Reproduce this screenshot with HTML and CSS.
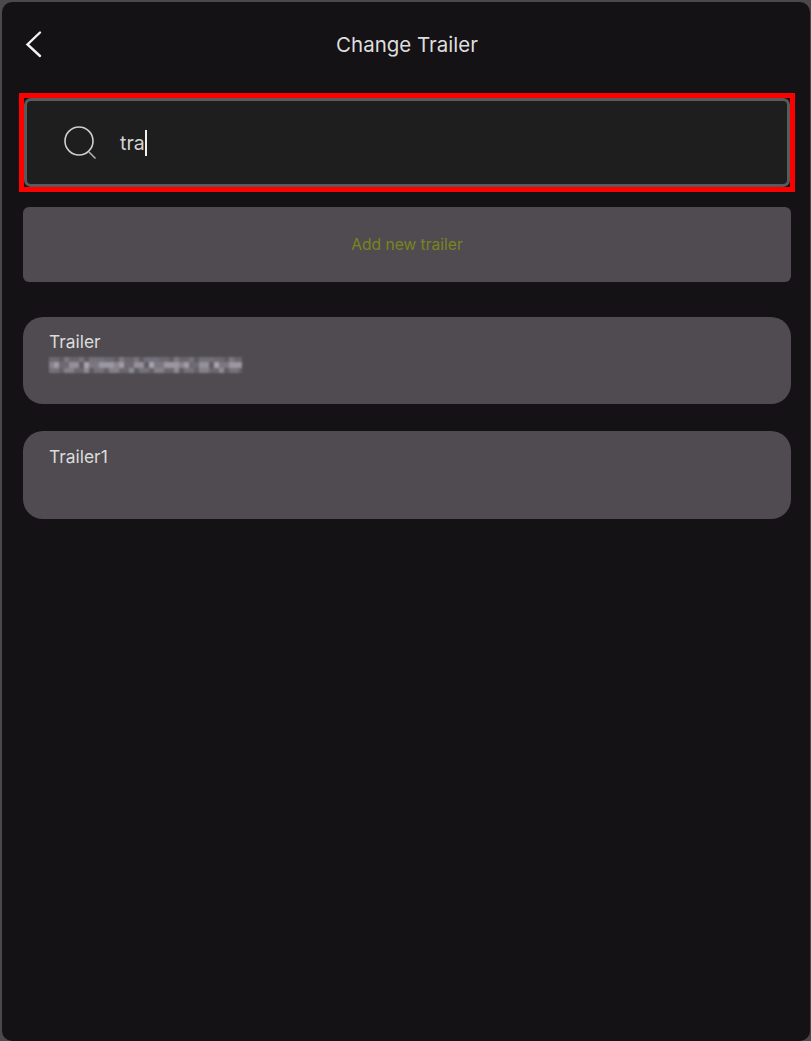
FILE: index.html
```html
<!DOCTYPE html>
<html lang="en">
<head>
<meta charset="utf-8">
<title>Change Trailer</title>
<link rel="stylesheet" href="styles.css">
</head>
<body>
<main class="panel">
  <header class="header">
    <button class="back" aria-label="Back">
      <svg width="20" height="28" viewBox="0 0 20 28" fill="none"><path d="M17 2.5 L4.5 14.5 L17 26" stroke="#f2f2f2" stroke-width="2.4" stroke-linecap="round" stroke-linejoin="miter"/></svg>
    </button>
    <h1 class="title">Change Trailer</h1>
  </header>
  <div class="highlight">
    <div class="search">
      <svg class="search-icon" width="36" height="36" viewBox="0 0 36 36" fill="none"><circle cx="16" cy="15" r="14" stroke="#cfcfcf" stroke-width="1.6"/><path d="M26 26 L32.5 32.5" stroke="#b5b5b5" stroke-width="1.5"/></svg>
      <span class="query">tra</span><span class="caret"></span>
    </div>
  </div>
  <button class="add">Add new trailer</button>
  <section class="list">
    <article class="card">
      <div class="name">Trailer</div>
      <div class="redacted"></div>
    </article>
    <article class="card">
      <div class="name">Trailer1</div>
    </article>
  </section>
</main>
</body>
</html>
```
FILE: styles.css
```css
html, body {
  margin: 0;
  height: 100%;
  background: #4a4a4c;
}
body {
  width: 811px;
  height: 1041px;
  overflow: hidden;
  font-family: "Inter", "Liberation Sans", sans-serif;
}
.panel {
  box-sizing: border-box;
  margin: 2px 1px 0 2px;
  height: 1039px;
  background: #151215;
  border-radius: 10px;
  padding: 0 19px 0 21px;
  display: flex;
  flex-direction: column;
}
.header {
  height: 91px;
  display: flex;
  align-items: center;
  justify-content: center;
  position: relative;
  flex: none;
}
.back {
  position: absolute;
  left: 0;
  top: 28px;
  padding: 0;
  margin: 0;
  border: 0;
  background: none;
  line-height: 0;
}
.title {
  margin: 0 0 7px 0;
  font-size: 20.5px;
  font-weight: 400;
  color: #dedede;
}
.highlight {
  margin: 0 -4px;
  border: 5px solid #ff0000;
  height: 99px;
  box-sizing: border-box;
  flex: none;
}
.search {
  box-sizing: border-box;
  height: 100%;
  background: #1e1e1e;
  border: 3px solid #5a5a5a;
  border-radius: 7px;
  display: flex;
  align-items: center;
  padding-left: 36px;
}
.search-icon {
  flex: none;
  margin-top: 2px;
}
.query {
  margin-left: 21px;
  font-size: 19.6px;
  color: #d4d4d4;
}
.caret {
  width: 2px;
  height: 26px;
  background: #f0f0f0;
}
.add {
  flex: none;
  margin: 15px 0 0 0;
  height: 74.5px;
  border: 0;
  border-radius: 6px;
  background: #4f4b50;
  color: #76861f;
  font: 400 15.6px "Inter", "Liberation Sans", sans-serif;
}
.list {
  margin-top: 35px;
  display: flex;
  flex-direction: column;
  gap: 27px;
}
.card {
  box-sizing: border-box;
  height: 87.5px;
  border-radius: 20px;
  background: #4f4b50;
  padding: 15.5px 27px;
}
.card:last-child {
  padding-top: 16px;
}
.name {
  font-size: 17.4px;
  line-height: 20px;
  color: #dcdcdc;
  margin-left: -1px;
}
.redacted {
  margin-top: 5px;
  margin-left: -1px;
  width: 193px;
  height: 16px;
  filter: blur(1.1px);
  background-image:
    repeating-linear-gradient(90deg, #6c6972 0 10px, #5f5c65 10px 15px, #7c7982 15px 20px, #68656e 20px 30px, #77747d 30px 35px, #5d5a62 35px 40px, #72707a 40px 55px),
    repeating-linear-gradient(90deg, #86838c 0 5px, #a09da6 5px 10px, #6d6a73 10px 20px, #94919b 20px 30px, #5f5c65 30px 35px, #a7a4ad 35px 40px, #7b7881 40px 50px, #9a97a0 50px 65px),
    repeating-linear-gradient(90deg, #75727b 0 10px, #63606a 10px 15px, #84818b 15px 25px, #6a6770 25px 35px, #8e8b95 35px 40px, #5e5b64 40px 45px);
  background-size: 100% 5px, 100% 6px, 100% 5px;
  background-position: 0 0, 0 5px, 0 11px;
  background-repeat: no-repeat;
}
```
